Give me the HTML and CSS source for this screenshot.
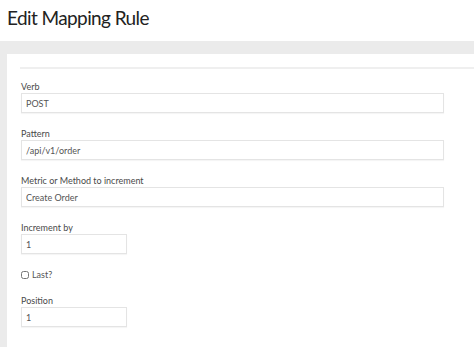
FILE: index.html
```html
<!DOCTYPE html>
<html lang="en">
<head>
    <meta charset="UTF-8">
    <meta name="viewport" content="width=device-width, initial-scale=1.0">
    <title>Edit Mapping Rule</title>
    <link rel="stylesheet" href="styles.css">
</head>
<body>
    <header class="page-header">
        <h1>Edit Mapping Rule</h1>
    </header>

    <main class="page-body">
        <div class="card">
            <hr class="divider">
            <form class="rule-form">
                <div class="field">
                    <label for="verb">Verb</label>
                    <input type="text" id="verb" value="POST">
                </div>
                <div class="field">
                    <label for="pattern">Pattern</label>
                    <input type="text" id="pattern" value="/api/v1/order">
                </div>
                <div class="field">
                    <label for="metric">Metric or Method to increment</label>
                    <input type="text" id="metric" value="Create Order">
                </div>
                <div class="field">
                    <label for="delta">Increment by</label>
                    <input type="text" id="delta" class="short" value="1">
                </div>
                <div class="field check">
                    <input type="checkbox" id="last">
                    <label for="last">Last?</label>
                </div>
                <div class="field">
                    <label for="position">Position</label>
                    <input type="text" id="position" class="short" value="1">
                </div>
            </form>
        </div>
    </main>
</body>
</html>
```

FILE: styles.css
```css
body {
    margin: 0;
    font-family: Lato, "Open Sans", sans-serif;
    color: #333;
    background: #fff;
}
.page-header h1 {
    margin: 0;
    padding: 6px 7px 11px;
    font-size: 19px;
    line-height: 24px;
    font-weight: 400;
    letter-spacing: -0.6px;
    color: #222;
}
.page-body {
    background: #ebebeb;
    padding: 13px 0 0 7px;
    height: 293px;
}
.card {
    background: #fff;
    height: 100%;
    padding: 13px 30px 0 13px;
    box-sizing: border-box;
}
.divider {
    margin: 0 -30px 0 0;
    border: none;
    border-top: 2px solid #efefef;
}
.rule-form {
    padding: 12px 0 0 1px;
}
.field {
    margin-bottom: 15px;
}
.field label {
    display: block;
    font-size: 9px;
    line-height: 12px;
    color: #4a4a4a;
}
.field input[type="text"] {
    display: block;
    width: 100%;
    height: 20px;
    box-sizing: border-box;
    margin: 0;
    padding: 0 4px;
    border: 1px solid #e4e4e4;
    box-shadow: 0 1px 1px rgba(0, 0, 0, 0.04);
    font-family: inherit;
    font-size: 9px;
    color: #555;
    background: #fff;
}
.field input.short {
    width: 106px;
}
.check {
    display: flex;
    align-items: center;
    gap: 3px;
    height: 12px;
    margin-top: 14px;
    margin-bottom: 14px;
}
.check input {
    margin: 0;
    width: 8px;
    height: 8px;
}
.check label {
    font-size: 9px;
    color: #555;
}
```
